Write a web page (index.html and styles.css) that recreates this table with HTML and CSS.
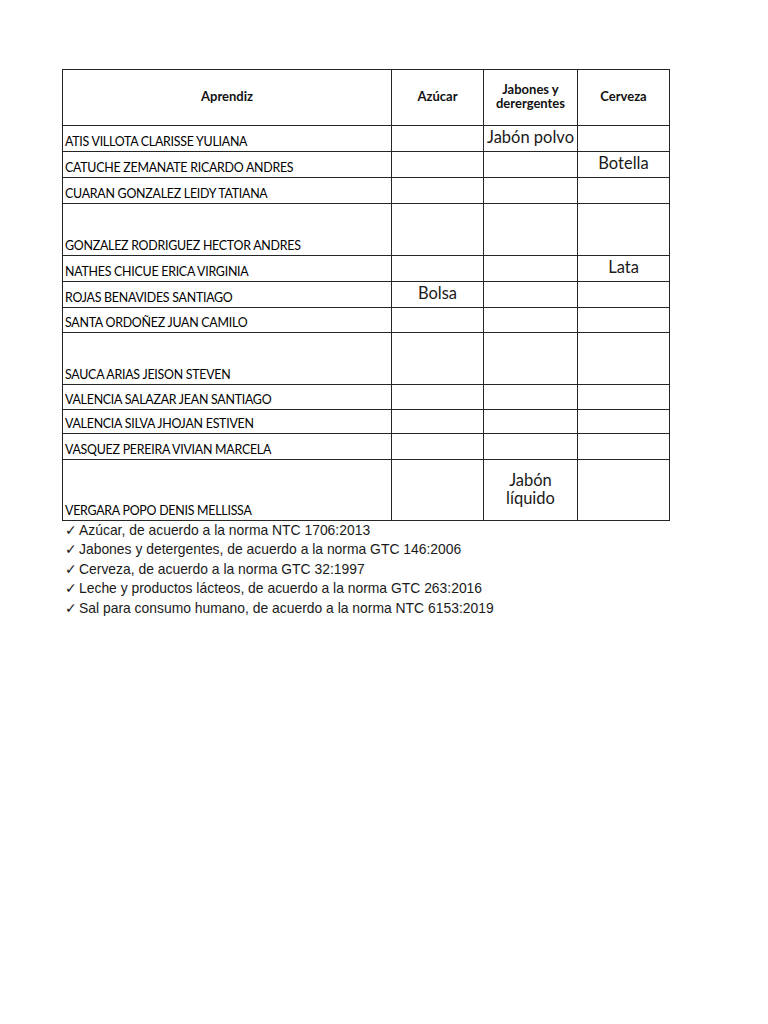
FILE: index.html
```html
<!DOCTYPE html>
<html lang="es">
<head>
<meta charset="utf-8">
<link rel="stylesheet" href="styles.css">
<title>Aprendices</title>
</head>
<body>
<div class="page">
  <table class="grid">
    <colgroup>
      <col class="c-name"><col class="c-a"><col class="c-j"><col class="c-c">
    </colgroup>
    <thead>
      <tr class="h-head">
        <th>Aprendiz</th>
        <th>Azúcar</th>
        <th>Jabones y<br>derergentes</th>
        <th>Cerveza</th>
      </tr>
    </thead>
    <tbody>
      <tr class="r26"><td class="name">ATIS VILLOTA CLARISSE YULIANA</td><td></td><td class="val">Jabón polvo</td><td></td></tr>
      <tr class="r26"><td class="name">CATUCHE ZEMANATE RICARDO ANDRES</td><td></td><td></td><td class="val">Botella</td></tr>
      <tr class="r26"><td class="name">CUARAN GONZALEZ LEIDY TATIANA</td><td></td><td></td><td></td></tr>
      <tr class="r52"><td class="name">GONZALEZ RODRIGUEZ HECTOR ANDRES</td><td></td><td></td><td></td></tr>
      <tr class="r26"><td class="name">NATHES CHICUE ERICA VIRGINIA</td><td></td><td></td><td class="val">Lata</td></tr>
      <tr class="r26"><td class="name">ROJAS BENAVIDES SANTIAGO</td><td class="val">Bolsa</td><td></td><td></td></tr>
      <tr class="r25"><td class="name">SANTA ORDOÑEZ JUAN CAMILO</td><td></td><td></td><td></td></tr>
      <tr class="r52"><td class="name">SAUCA ARIAS JEISON STEVEN</td><td></td><td></td><td></td></tr>
      <tr class="r25"><td class="name">VALENCIA SALAZAR JEAN SANTIAGO</td><td></td><td></td><td></td></tr>
      <tr class="r24"><td class="name">VALENCIA SILVA JHOJAN ESTIVEN</td><td></td><td></td><td></td></tr>
      <tr class="r26"><td class="name">VASQUEZ PEREIRA VIVIAN MARCELA</td><td></td><td></td><td></td></tr>
      <tr class="r61"><td class="name">VERGARA POPO DENIS MELLISSA</td><td></td><td class="val mid">Jabón<br>líquido</td><td></td></tr>
    </tbody>
  </table>
  <ul class="norms">
    <li><span class="check">✓</span>Azúcar, de acuerdo a la norma NTC 1706:2013</li>
    <li><span class="check">✓</span>Jabones y detergentes, de acuerdo a la norma GTC 146:2006</li>
    <li><span class="check">✓</span>Cerveza, de acuerdo a la norma GTC 32:1997</li>
    <li><span class="check">✓</span>Leche y productos lácteos, de acuerdo a la norma GTC 263:2016</li>
    <li><span class="check">✓</span>Sal para consumo humano, de acuerdo a la norma NTC 6153:2019</li>
  </ul>
</div>
</body>
</html>
```

FILE: styles.css
```css
html, body {
  margin: 0;
  padding: 0;
  background: #ffffff;
}

.page {
  padding: 69px 0 0 62px;
  font-family: "Lato", "Liberation Sans", sans-serif;
  color: #111111;
}

.grid {
  border-collapse: collapse;
  table-layout: fixed;
  width: 607px;
}

.c-name { width: 329px; }
.c-a { width: 92px; }
.c-j { width: 94px; }
.c-c { width: 92px; }

.grid th,
.grid td {
  border: 1px solid #262626;
  padding: 0;
  box-sizing: border-box;
}

.grid th {
  font-size: 13px;
  font-weight: 700;
  line-height: 14px;
  text-align: center;
  vertical-align: middle;
  padding-bottom: 3px;
}

.h-head { height: 56px; }
.r26 { height: 26px; }
.r25 { height: 25px; }
.r24 { height: 24px; }
.r52 { height: 52px; }
.r61 { height: 61px; }

.name {
  font-size: 12.4px;
  line-height: 14px;
  letter-spacing: -0.25px;
  vertical-align: bottom;
  padding: 0 0 2px 2px !important;
  white-space: nowrap;
  color: #000000;
}

.val {
  font-size: 16.5px;
  line-height: 18px;
  text-align: center;
  vertical-align: top;
  padding-top: 2px !important;
  color: #1a1a1a;
}

.val.mid {
  vertical-align: middle;
  padding-top: 0 !important;
  padding-bottom: 3px !important;
}

.norms {
  list-style: none;
  margin: 0;
  padding: 0 0 0 3px;
  font-family: "Liberation Sans", Arial, sans-serif;
  font-size: 13.9px;
  line-height: 19.4px;
  color: #1a1a1a;
}

.norms li {
  height: 19.4px;
  white-space: nowrap;
}

.check {
  display: inline-block;
  width: 14px;
  font-family: "DejaVu Sans", sans-serif;
  font-size: 14px;
  line-height: 12px;
  vertical-align: baseline;
}
```
